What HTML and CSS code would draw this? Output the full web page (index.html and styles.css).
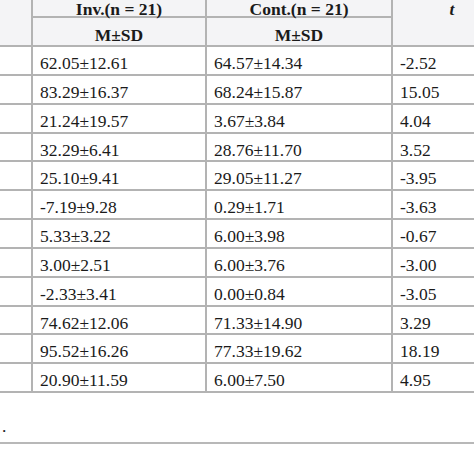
FILE: index.html
```html
<!DOCTYPE html>
<html>
<head>
<meta charset="utf-8">
<link rel="stylesheet" href="styles.css">
</head>
<body>
<div class="page">
  <table class="data">
    <colgroup>
      <col class="c1"><col class="c2"><col class="c3"><col class="c4">
    </colgroup>
    <thead>
      <tr class="h1">
        <th rowspan="2" class="blank"></th>
        <th>Inv.(n = 21)</th>
        <th>Cont.(n = 21)</th>
        <th rowspan="2" class="tcol"><em>t</em></th>
      </tr>
      <tr class="h2">
        <th>M±SD</th>
        <th>M±SD</th>
      </tr>
    </thead>
    <tbody>
      <tr><td></td><td>62.05±12.61</td><td>64.57±14.34</td><td>-2.52</td></tr>
      <tr><td></td><td>83.29±16.37</td><td>68.24±15.87</td><td>15.05</td></tr>
      <tr><td></td><td>21.24±19.57</td><td>3.67±3.84</td><td>4.04</td></tr>
      <tr><td></td><td>32.29±6.41</td><td>28.76±11.70</td><td>3.52</td></tr>
      <tr><td></td><td>25.10±9.41</td><td>29.05±11.27</td><td>-3.95</td></tr>
      <tr><td></td><td>-7.19±9.28</td><td>0.29±1.71</td><td>-3.63</td></tr>
      <tr><td></td><td>5.33±3.22</td><td>6.00±3.98</td><td>-0.67</td></tr>
      <tr><td></td><td>3.00±2.51</td><td>6.00±3.76</td><td>-3.00</td></tr>
      <tr><td></td><td>-2.33±3.41</td><td>0.00±0.84</td><td>-3.05</td></tr>
      <tr><td></td><td>74.62±12.06</td><td>71.33±14.90</td><td>3.29</td></tr>
      <tr><td></td><td>95.52±16.26</td><td>77.33±19.62</td><td>18.19</td></tr>
      <tr><td></td><td>20.90±11.59</td><td>6.00±7.50</td><td>4.95</td></tr>
    </tbody>
  </table>
  <div class="note">.</div>
</div>
</body>
</html>
```
FILE: styles.css
```css
html, body {
  margin: 0;
  padding: 0;
  background: #ffffff;
  overflow: hidden;
}
.page {
  width: 474px;
  height: 474px;
  overflow: hidden;
  font-family: "Liberation Serif", "Times New Roman", serif;
  font-size: 17.5px;
  color: #1a1a1a;
}
.data {
  border-collapse: collapse;
  table-layout: fixed;
  width: 512px;
}
.c1 { width: 32px; }
.c2 { width: 174px; }
.c3 { width: 186px; }
.c4 { width: 120px; }
.data th,
.data td {
  border: 2px solid #b3b3b3;
  line-height: 20px;
  white-space: nowrap;
}
.data th {
  background: #f4f4f6;
  font-weight: bold;
  text-align: center;
  padding: 7px 0 0 0;
  vertical-align: top;
}
.data tr.h1 th {
  border-top: none;
  padding: 2px 0 0 0;
  line-height: 14px;
}
.data td {
  text-align: left;
  padding: 6px 0 0.85px 7px;
  vertical-align: top;
}
.data th.blank,
.data td:first-child {
  border-left: none;
}
.tcol em {
  font-style: italic;
}
.note {
  height: 51px;
  border-bottom: 2px solid #b8b8b8;
  box-sizing: border-box;
  padding: 23px 0 0 2px;
  line-height: 20px;
}
```
